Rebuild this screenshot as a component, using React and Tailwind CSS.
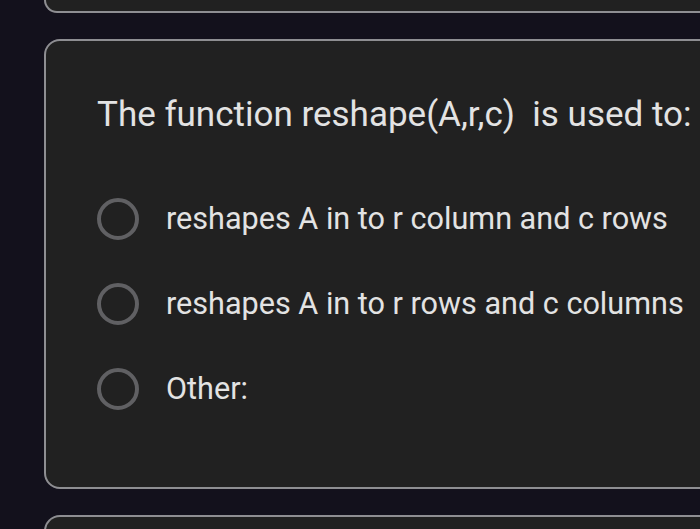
import React from 'react';

const options = [
    'reshapes A in to r column and c rows',
    'reshapes A in to r rows and c columns',
    'Other:',
];

const Radio = () => (
    <div className="w-[42px] h-[42px] rounded-full border-[4px] border-[#606063] shrink-0" />
);

const App = () => {
    return (
        <div className="w-[700px] h-[529px] overflow-hidden bg-[#13111c] flex flex-col gap-[26px]" style={{ fontFamily: 'Roboto, "Liberation Sans", sans-serif' }}>
            <div className="ml-[44px] w-[720px] h-[13px] shrink-0 bg-[#212121] border-2 border-t-0 border-[#8e8e92] rounded-b-[16px]" />

            <div className="ml-[44px] w-[720px] h-[450px] shrink-0 bg-[#212121] border-2 border-[#8e8e92] rounded-[16px] pl-[51px] pt-[52px]">
                <h1 className="text-[35px] leading-[44px] text-[#e3e3e3] whitespace-pre">
                    The function reshape(A,r,c)  is used to:
                </h1>
                <div className="flex flex-col gap-[43px] mt-[61px]">
                    {options.map((option) => (
                        <div key={option} className="flex items-center gap-[27px] h-[42px]">
                            <Radio />
                            <span className="text-[30.6px] text-[#e3e3e3] whitespace-nowrap">{option}</span>
                        </div>
                    ))}
                </div>
            </div>

            <div className="ml-[44px] w-[720px] h-[60px] shrink-0 bg-[#212121] border-2 border-b-0 border-[#8e8e92] rounded-t-[16px]" />
        </div>
    );
};

export default App;
